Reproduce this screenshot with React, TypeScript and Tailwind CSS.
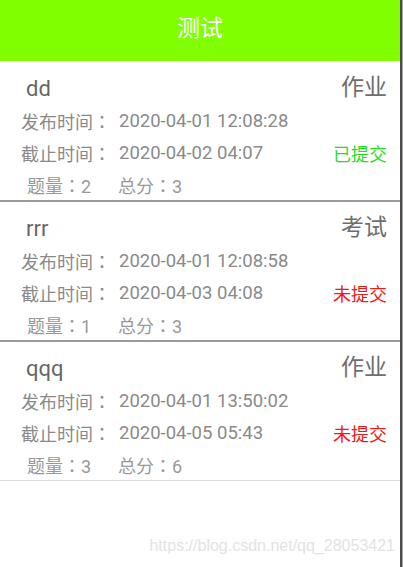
const cjk = "font-['Roboto','Noto_Sans_CJK_SC',sans-serif]";

type Task = {
  name: string;
  kind: string;
  publish: string;
  deadline: string;
  count: number;
  score: number;
  submitted: boolean;
};

const tasks: Task[] = [
  { name: "dd", kind: "作业", publish: "2020-04-01 12:08:28", deadline: "2020-04-02 04:07", count: 2, score: 3, submitted: true },
  { name: "rrr", kind: "考试", publish: "2020-04-01 12:08:58", deadline: "2020-04-03 04:08", count: 1, score: 3, submitted: false },
  { name: "qqq", kind: "作业", publish: "2020-04-01 13:50:02", deadline: "2020-04-05 05:43", count: 3, score: 6, submitted: false },
];

// 全角冒号居中显示
function Colon() {
  return <span className="font-['Noto_Sans_CJK_TC',sans-serif]">：</span>;
}

function TaskItem({ task, last }: { task: Task; last: boolean }) {
  return (
    <div className={last ? "border-b border-[#dcdcdc]" : "border-b-2 border-[#9a9a9a]"}>
      <div className="h-[138px] pt-[10px] pr-[13px]">
        {/* 标题 + 类型 */}
        <div className="flex items-center justify-between h-[32px]">
          <span className="pl-[26px] text-[22px] text-[#666666]">{task.name}</span>
          <span className="text-[23px] text-[#6e6e6e]">{task.kind}</span>
        </div>
        <div className="flex items-center h-[32px] mt-[2px] pl-[21px] text-[18px] text-[#8a8a8a]">
          <span className="w-[98px]">发布时间<Colon /></span>
          <span className="text-[18.5px]">{task.publish}</span>
        </div>
        <div className="flex items-center justify-between h-[32px] pl-[21px] text-[18px] text-[#8a8a8a]">
          <div className="flex items-center">
            <span className="w-[98px]">截止时间<Colon /></span>
            <span className="text-[18.5px]">{task.deadline}</span>
          </div>
          <span className={task.submitted ? "text-[#1fe01f]" : "text-[#f01818]"}>
            {task.submitted ? "已提交" : "未提交"}
          </span>
        </div>
        <div className="flex items-center h-[28px] mt-[2px] pl-[27px] text-[18px] text-[#999999]">
          <span className="w-[91px]">题量<Colon />{task.count}</span>
          <span>总分<Colon />{task.score}</span>
        </div>
      </div>
    </div>
  );
}

export default function App() {
  return (
    <div className={`relative flex w-[403px] h-[567px] bg-white overflow-hidden ${cjk}`}>
      <div className="w-[400px]">
        <div className="h-[61px] bg-[#7fff00] flex items-center justify-center">
          <span className="text-white text-[23px] -mt-[2px]">测试</span>
        </div>
        <div className="h-[1px]" />
        {tasks.map((t, i) => (
          <TaskItem key={t.name} task={t} last={i === tasks.length - 1} />
        ))}
      </div>
      <div className="w-[2px] bg-[#4d4d4d]" />
      <div className="w-[1px] bg-[#a3a3a3]" />
      {/* 水印 */}
      <span className="absolute right-[8px] bottom-[9px] text-[16px] text-[#e3e3e3] font-['Liberation_Sans',sans-serif]">
        https://blog.csdn.net/qq_28053421
      </span>
    </div>
  );
}
